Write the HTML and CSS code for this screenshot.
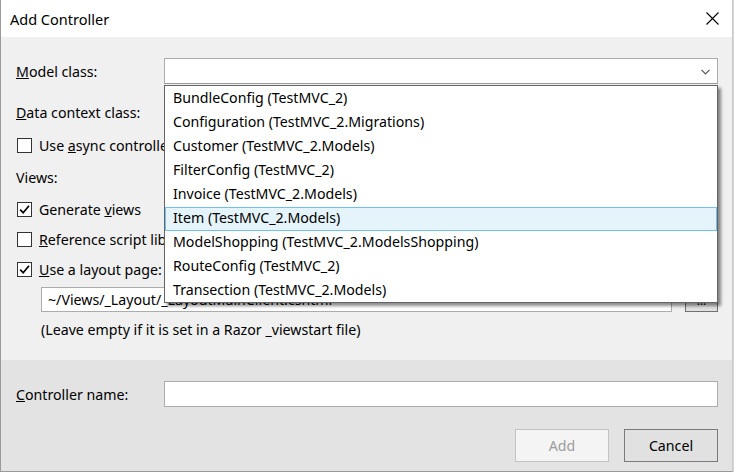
FILE: index.html
```html
<!DOCTYPE html>
<html>
<head>
<meta charset="utf-8">
<link rel="stylesheet" href="styles.css">
</head>
<body>
<div class="window">
  <div class="titlebar">
    <span class="title">Add Controller</span>
    <svg class="close" width="13" height="13" viewBox="0 0 13 13"><path d="M0.5 0.5 L12.5 12.5 M12.5 0.5 L0.5 12.5" stroke="#000" stroke-width="1.1" fill="none"/></svg>
  </div>
  <div class="content">
    <div class="row r-model">
      <label class="lbl"><u>M</u>odel class:</label>
      <div class="combo">
        <svg class="chev" width="9" height="6" viewBox="0 0 9 6"><path d="M0.5 0.8 L4.5 4.8 L8.5 0.8" stroke="#555" stroke-width="1.2" fill="none"/></svg>
      </div>
    </div>
    <div class="row r-data">
      <label class="lbl"><u>D</u>ata context class:</label>
      <div class="combo"></div>
    </div>
    <div class="row r-async">
      <span class="cb"></span><span class="cbtext">Use <u>a</u>sync controller actions</span>
    </div>
    <div class="row r-views">Views:</div>
    <div class="row r-gen">
      <span class="cb"><svg width="13" height="13" viewBox="0 0 13 13"><path d="M2.2 6.6 L5.2 9.8 L11 2.8" stroke="#000" stroke-width="1.7" fill="none"/></svg></span><span class="cbtext">Generate <u>v</u>iews</span>
    </div>
    <div class="row r-ref">
      <span class="cb"></span><span class="cbtext"><u>R</u>eference script libraries</span>
    </div>
    <div class="row r-layout">
      <span class="cb"><svg width="13" height="13" viewBox="0 0 13 13"><path d="M2.2 6.6 L5.2 9.8 L11 2.8" stroke="#000" stroke-width="1.7" fill="none"/></svg></span><span class="cbtext"><u>U</u>se a layout page:</span>
    </div>
    <div class="row r-path">
      <div class="textbox path">~/Views/_Layout/_LayoutMainClient.cshtml</div>
      <div class="browse">...</div>
    </div>
    <div class="row r-hint">(Leave empty if it is set in a Razor _viewstart file)</div>
  </div>
  <div class="footer">
    <div class="row r-name">
      <label class="lbl"><u>C</u>ontroller name:</label>
      <div class="textbox name"></div>
    </div>
    <div class="buttons">
      <div class="btn disabled">Add</div>
      <div class="btn cancel">Cancel</div>
    </div>
  </div>

  <div class="dropdown">
    <div class="item">BundleConfig (TestMVC_2)</div>
    <div class="item">Configuration (TestMVC_2.Migrations)</div>
    <div class="item">Customer (TestMVC_2.Models)</div>
    <div class="item">FilterConfig (TestMVC_2)</div>
    <div class="item">Invoice (TestMVC_2.Models)</div>
    <div class="item selected">Item (TestMVC_2.Models)</div>
    <div class="item">ModelShopping (TestMVC_2.ModelsShopping)</div>
    <div class="item">RouteConfig (TestMVC_2)</div>
    <div class="item">Transection (TestMVC_2.Models)</div>
  </div>
</div>
</body>
</html>
```

FILE: styles.css
```css
html, body {
  margin: 0;
  padding: 0;
}
body {
  background: #d8d8d8;
  font-family: "Noto Sans", "Open Sans", sans-serif;
  font-size: 14.2px;
  color: #000;
  width: 734px;
  height: 472px;
  overflow: hidden;
}
.window {
  position: relative;
  width: 733px;
  height: 472px;
  box-sizing: border-box;
  border-left: 1px solid #9a9a9a;
  border-right: 1px solid #c8c8c8;
  border-bottom: 1px solid #9a9a9a;
  background: #f0f0f0;
  display: flex;
  flex-direction: column;
}
.titlebar {
  height: 37px;
  background: #fff;
  display: flex;
  align-items: center;
  justify-content: space-between;
  padding: 0 13px 0 9px;
  flex: none;
}
.title {
  font-size: 14.5px;
}
.close {
  display: block;
}
.content {
  height: 323px;
  flex: none;
  padding: 21px 14px 0 15px;
  box-sizing: border-box;
  background: #f0f0f0;
}
.row {
  display: flex;
  align-items: center;
}
.lbl {
  width: 148px;
  flex: none;
}
.combo {
  flex: 1;
  height: 26px;
  box-sizing: border-box;
  background: #fff;
  border: 1px solid #acacac;
  border-bottom-color: #9a9a9a;
  display: flex;
  align-items: center;
  justify-content: flex-end;
  padding-right: 7px;
}
.chev {
  display: block;
  margin-top: 1px;
}
.r-model { height: 26px; }
.r-data { height: 26px; margin-top: 15px; }
.r-async { height: 22px; margin-top: 9px; }
.r-views { height: 22px; margin-top: 10px; }
.r-gen { height: 22px; margin-top: 10px; }
.r-ref { height: 22px; margin-top: 8px; }
.r-layout { height: 22px; margin-top: 8px; }
.r-path { height: 25px; margin-top: 7px; padding-left: 25px; }
.r-hint { height: 22px; margin-top: 6px; padding-left: 25px; }
.cb {
  width: 15px;
  height: 15px;
  box-sizing: border-box;
  border: 1px solid #333;
  background: #fff;
  flex: none;
  margin-left: 1px;
  display: flex;
  align-items: center;
  justify-content: center;
}
.cb svg { display: block; }
.cbtext {
  margin-left: 7px;
  white-space: nowrap;
}
.textbox {
  height: 25px;
  box-sizing: border-box;
  background: #fff;
  border: 1px solid #acacac;
  padding-left: 6px;
  display: flex;
  align-items: center;
  white-space: nowrap;
  overflow: hidden;
}
.path {
  width: 631px;
  flex: none;
}
.browse {
  width: 34px;
  height: 25px;
  box-sizing: border-box;
  margin-left: 13px;
  border: 1px solid #707070;
  background: #e1e1e1;
  display: flex;
  align-items: flex-end;
  justify-content: center;
  font-size: 12px;
  line-height: 1;
  padding-bottom: 4px;
}
.footer {
  flex: 1;
  background: #e3e3e3;
  padding: 21px 14px 0 15px;
  box-sizing: border-box;
}
.r-name { height: 26px; }
.name {
  flex: 1;
  height: 26px;
}
.buttons {
  display: flex;
  justify-content: flex-end;
  gap: 15px;
  margin-top: 22px;
}
.btn {
  width: 94px;
  height: 33px;
  box-sizing: border-box;
  display: flex;
  align-items: center;
  justify-content: center;
}
.btn.disabled {
  background: #f4f4f4;
  border: 1px solid #c3c3c3;
  color: #9d9d9d;
}
.btn.cancel {
  background: #e1e1e1;
  border: 1px solid #7a7a7a;
}
.dropdown {
  position: absolute;
  left: 163px;
  top: 85px;
  width: 554px;
  height: 218px;
  box-sizing: border-box;
  background: #fff;
  border: 1px solid #646464;
  box-shadow: 3px 3px 3px rgba(0, 0, 0, 0.45);
  padding-top: 1px;
}
.item {
  height: 24px;
  box-sizing: border-box;
  padding-left: 7px;
  padding-bottom: 3px;
  display: flex;
  align-items: center;
  white-space: nowrap;
  border: 1px solid transparent;
}
.item.selected {
  background: #e5f3fb;
  border-color: #70c0e7;
}
```
